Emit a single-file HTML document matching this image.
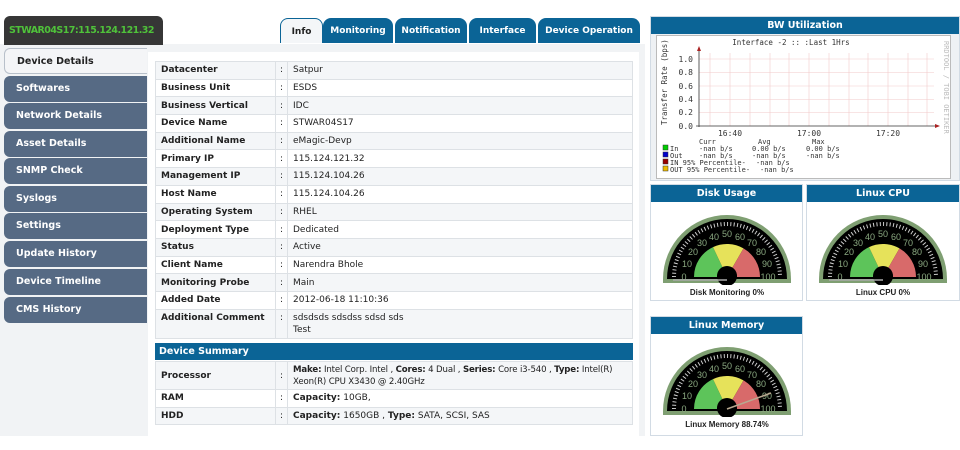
<!DOCTYPE html>
<html><head><meta charset="utf-8"><style>
*{margin:0;padding:0;box-sizing:border-box}
body{width:960px;height:450px;background:#fff;font-family:"DejaVu Sans",Verdana,sans-serif;position:relative;overflow:hidden;font-size:9px;color:#222}
.abs{position:absolute}
.bg{left:0;top:44px;width:645px;height:392px;background:#f1f3f5}
.title{left:4px;top:16px;width:159px;height:29px;background:#363636;border-radius:6px 6px 0 0;color:#4fc23a;font-weight:bold;font-size:9.5px;line-height:29px;padding-left:5px;letter-spacing:-.55px;white-space:nowrap;overflow:hidden}
.tab{top:18px;height:25px;background:#0b6496;color:#fff;font-weight:bold;font-size:9px;text-align:center;line-height:27px;border-radius:8px 8px 0 0;white-space:nowrap}
.tab.on{background:#f4f6f8;color:#222;border:1px solid #0b6496;border-bottom:none}
.nav{left:4px;width:143px;height:26px;background:#566a84;color:#fff;font-weight:bold;font-size:9.5px;line-height:26px;padding-left:12px;border-radius:6px 0 0 6px}
.nav.on{background:#f4f5f7;color:#222;border:1px solid #b8c0ca;border-right:none}
.main{left:148px;top:52px;width:491px;height:384px;background:#fff}
table{position:absolute;left:155px;border-collapse:collapse;width:478px;font-size:9px}
td{border:1px solid #dde1e5;height:17.7px;padding:0 5px;vertical-align:middle}
td.l{font-weight:bold;width:120px}
td.c{width:12px;text-align:center;padding:0}
tr:nth-child(odd) td{background:#f4f6f8}
tr:nth-child(even) td{background:#fff}
.sh{left:155px;top:343px;width:478px;height:17px;background:#0b6496;color:#fff;font-weight:bold;font-size:9.5px;line-height:17px;padding-left:4px}
.ph{background:#0b6496;color:#fff;font-weight:bold;font-size:9.5px;text-align:center;height:17px;line-height:17px}
.panel{border:1px solid #d2dbe4;background:#fff}
.lbl{background:#fff;font-family:"Liberation Sans",Arial,sans-serif;font-weight:bold;font-size:8px;text-align:center;height:11px;line-height:11px}
</style></head><body>
<div class="abs bg"></div>
<div class="abs title">STWAR04S17:115.124.121.32</div>
<div class="abs tab on" style="left:280px;width:43px">Info</div>
<div class="abs tab" style="left:323px;width:70px">Monitoring</div>
<div class="abs tab" style="left:395px;width:72px">Notification</div>
<div class="abs tab" style="left:469px;width:67px">Interface</div>
<div class="abs tab" style="left:538px;width:102px">Device Operation</div>

<div class="abs nav on" style="top:48px">Device Details</div>
<div class="abs nav" style="top:76px">Softwares</div>
<div class="abs nav" style="top:103px">Network Details</div>
<div class="abs nav" style="top:131px">Asset Details</div>
<div class="abs nav" style="top:158px">SNMP Check</div>
<div class="abs nav" style="top:186px">Syslogs</div>
<div class="abs nav" style="top:213px">Settings</div>
<div class="abs nav" style="top:241px">Update History</div>
<div class="abs nav" style="top:269px">Device Timeline</div>
<div class="abs nav" style="top:297px">CMS History</div>

<div class="abs main"></div>
<table style="top:61px">
<tr><td class="l">Datacenter</td><td class="c">:</td><td>Satpur</td></tr>
<tr><td class="l">Business Unit</td><td class="c">:</td><td>ESDS</td></tr>
<tr><td class="l">Business Vertical</td><td class="c">:</td><td>IDC</td></tr>
<tr><td class="l">Device Name</td><td class="c">:</td><td>STWAR04S17</td></tr>
<tr><td class="l">Additional Name</td><td class="c">:</td><td>eMagic-Devp</td></tr>
<tr><td class="l">Primary IP</td><td class="c">:</td><td>115.124.121.32</td></tr>
<tr><td class="l">Management IP</td><td class="c">:</td><td>115.124.104.26</td></tr>
<tr><td class="l">Host Name</td><td class="c">:</td><td>115.124.104.26</td></tr>
<tr><td class="l">Operating System</td><td class="c">:</td><td>RHEL</td></tr>
<tr><td class="l">Deployment Type</td><td class="c">:</td><td>Dedicated</td></tr>
<tr><td class="l">Status</td><td class="c">:</td><td>Active</td></tr>
<tr><td class="l">Client Name</td><td class="c">:</td><td>Narendra Bhole</td></tr>
<tr><td class="l">Monitoring Probe</td><td class="c">:</td><td>Main</td></tr>
<tr><td class="l">Added Date</td><td class="c">:</td><td>2012-06-18 11:10:36</td></tr>
<tr><td class="l" style="vertical-align:top;padding-top:3px">Additional Comment</td><td class="c" style="vertical-align:top;padding-top:3px">:</td><td style="height:29px;line-height:12px">sdsdsds sdsdss sdsd sds<br>Test</td></tr>
</table>
<div class="abs sh">Device Summary</div>
<table style="top:361px">
<tr><td class="l" style="height:28px">Processor</td><td class="c">:</td><td style="line-height:12px;font-size:8.6px;letter-spacing:-.15px"><b>Make:</b> Intel Corp. Intel , <b>Cores:</b> 4 Dual , <b>Series:</b> Core i3-540 , <b>Type:</b> Intel(R)<br>Xeon(R) CPU X3430 @ 2.40GHz</td></tr>
<tr><td class="l">RAM</td><td class="c">:</td><td><b>Capacity:</b> 10GB,</td></tr>
<tr><td class="l">HDD</td><td class="c">:</td><td><b>Capacity:</b> 1650GB , <b>Type:</b> SATA, SCSI, SAS</td></tr>
</table>

<div class="abs panel" style="left:650px;top:16px;width:310px;height:165px;background:#eef1f4">
<div class="ph">BW Utilization</div>
</div>
<svg class="abs" style="left:656px;top:35px" width="295" height="144" viewBox="0 0 295 144" font-family="'DejaVu Sans Mono','Liberation Mono',monospace" font-size="7.5">
<rect x="0.5" y="0.5" width="294" height="143" fill="#fff" stroke="#bbb"/>
<text x="135" y="10" text-anchor="middle" fill="#333">Interface -2 :: :Last 1Hrs</text>
<text transform="translate(288,6) rotate(90)" fill="#bbb" font-size="7">RRDTOOL / TOBI OETIKER</text>
<text transform="translate(11,90) rotate(-90)" fill="#333" font-size="7.5">Transfer Rate (bps)</text>
<g stroke="#f2caca" stroke-width="0.6">
<line x1="43" y1="77.5" x2="278" y2="77.5"/><line x1="43" y1="64.5" x2="278" y2="64.5"/><line x1="43" y1="51" x2="278" y2="51"/><line x1="43" y1="37.5" x2="278" y2="37.5"/><line x1="43" y1="24" x2="278" y2="24"/>
<line x1="54" y1="18" x2="54" y2="91"/><line x1="74" y1="18" x2="74" y2="91"/><line x1="94" y1="18" x2="94" y2="91"/><line x1="114" y1="18" x2="114" y2="91"/><line x1="133" y1="18" x2="133" y2="91"/><line x1="153" y1="18" x2="153" y2="91"/><line x1="173" y1="18" x2="173" y2="91"/><line x1="193" y1="18" x2="193" y2="91"/><line x1="212" y1="18" x2="212" y2="91"/><line x1="232" y1="18" x2="232" y2="91"/><line x1="252" y1="18" x2="252" y2="91"/><line x1="271" y1="18" x2="271" y2="91"/>
</g>
<g stroke="#333" stroke-width="0.8"><line x1="43" y1="14" x2="43" y2="92"/><line x1="40" y1="91" x2="280" y2="91"/></g>
<path d="M41 16 L43 11 L45 16Z M279 89 L284 91 L279 93Z" fill="#a22"/>
<g fill="#333" font-size="8" text-anchor="end"><text x="37" y="27">1.0</text><text x="37" y="40">0.8</text><text x="37" y="54">0.6</text><text x="37" y="67">0.4</text><text x="37" y="80">0.2</text><text x="37" y="94">0.0</text></g>
<g fill="#333" font-size="8" text-anchor="middle"><text x="74" y="101">16:40</text><text x="153" y="101">17:00</text><text x="232" y="101">17:20</text></g>
<g fill="#333" font-size="7" style="white-space:pre"><text x="43" y="109">Curr</text><text x="102" y="109">Avg</text><text x="156" y="109">Max</text>
<text x="14" y="116">In</text><text x="43" y="116">-nan  b/s</text><text x="96" y="116">0.00  b/s</text><text x="150" y="116">0.00  b/s</text>
<text x="14" y="123">Out</text><text x="43" y="123">-nan  b/s</text><text x="96" y="123">-nan  b/s</text><text x="150" y="123">-nan  b/s</text>
<text x="14" y="130">IN 95% Percentile-</text><text x="100" y="130">-nan  b/s</text>
<text x="14" y="137">OUT 95% Percentile-</text><text x="104" y="137">-nan  b/s</text></g>
<rect x="7" y="110" width="5" height="5" fill="#0c0" stroke="#333" stroke-width=".5"/>
<rect x="7" y="117" width="5" height="5" fill="#00c" stroke="#333" stroke-width=".5"/>
<rect x="7" y="124" width="5" height="5" fill="#900" stroke="#333" stroke-width=".5"/>
<rect x="7" y="131" width="5" height="5" fill="#eb0" stroke="#333" stroke-width=".5"/>
</svg>

<svg width="0" height="0" style="position:absolute">
<defs>
<g id="gauge" font-family="'Liberation Sans',Arial,sans-serif" font-size="9" fill="#8aa880" text-anchor="middle">
<path d="M12 72 A64 64 0 0 1 140 72 L140 76 L12 76Z" fill="#7f9f72"/>
<path d="M16 72 A60 60 0 0 1 136 72Z" fill="#000"/>
<path d="M23 70 A53 53 0 0 1 129 70" fill="none" stroke="#ccc" stroke-width="4" stroke-dasharray="1 2.33"/>
<text x="33" y="73">0</text><text x="36" y="60">10</text><text x="42" y="48">20</text><text x="51" y="39">30</text><text x="63" y="33">40</text><text x="76" y="30">50</text><text x="89" y="33">60</text><text x="101" y="39">70</text><text x="110" y="48">80</text><text x="116" y="60">90</text><text x="117" y="73">100</text>
<path d="M43 70 A33 33 0 0 1 62 40.1 L71.8 60.9 A10 10 0 0 0 66 70Z" fill="#5dc45a"/>
<path d="M62 40.1 A33 33 0 0 1 92.5 41.4 L81 61.3 A10 10 0 0 0 71.8 60.9Z" fill="#e6e25a"/>
<path d="M92.5 41.4 A33 33 0 0 1 109 70 L86 70 A10 10 0 0 0 81 61.3Z" fill="#d86a6a"/>
<circle cx="76" cy="69" r="10" fill="#000"/>
</g>
</defs></svg>

<div class="abs panel" style="left:650px;top:184px;width:153px;height:117px">
<div class="ph">Disk Usage</div>
<svg style="position:absolute;left:0;top:22px" width="152" height="78"><use href="#gauge"/><line x1="76" y1="73" x2="22" y2="73" stroke="#aaa" stroke-width="1.5"/></svg>
<div class="lbl" style="position:absolute;left:20px;top:102px;width:112px">Disk Monitoring 0%</div>
</div>
<div class="abs panel" style="left:806px;top:184px;width:154px;height:117px">
<div class="ph">Linux CPU</div>
<svg style="position:absolute;left:0;top:22px" width="152" height="78"><use href="#gauge"/><line x1="76" y1="73" x2="22" y2="73" stroke="#aaa" stroke-width="1.5"/></svg>
<div class="lbl" style="position:absolute;left:20px;top:102px;width:112px">Linux CPU 0%</div>
</div>
<div class="abs panel" style="left:650px;top:316px;width:153px;height:120px">
<div class="ph">Linux Memory</div>
<svg style="position:absolute;left:0;top:22px" width="152" height="78"><use href="#gauge"/><line x1="76" y1="70" x2="120" y2="54" stroke="#b8a890" stroke-width="1.5"/></svg>
<div class="lbl" style="position:absolute;left:20px;top:102px;width:112px">Linux Memory 88.74%</div>
</div>
</body></html>
